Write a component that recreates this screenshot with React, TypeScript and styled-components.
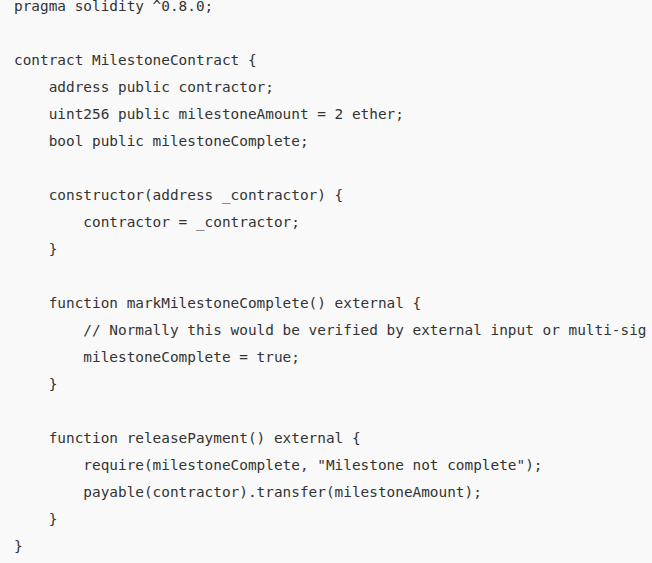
import React from "react";
import styled, { createGlobalStyle } from "styled-components";

const Global = createGlobalStyle`
  html, body { margin: 0; padding: 0; background: #f9f9f9; }
  body { overflow: hidden; }
`;

const Code = styled.pre`
  margin: -7px 0 0 0;
  padding: 0 0 0 14px;
  background: #f9f9f9;
  color: #333333;
  font-family: "DejaVu Sans Mono", "Liberation Mono", monospace;
  font-size: 14.4px;
  line-height: 27px;
  white-space: pre;
  width: 652px;
  box-sizing: border-box;
`;

const source = `pragma solidity ^0.8.0;

contract MilestoneContract {
    address public contractor;
    uint256 public milestoneAmount = 2 ether;
    bool public milestoneComplete;

    constructor(address _contractor) {
        contractor = _contractor;
    }

    function markMilestoneComplete() external {
        // Normally this would be verified by external input or multi-sig
        milestoneComplete = true;
    }

    function releasePayment() external {
        require(milestoneComplete, "Milestone not complete");
        payable(contractor).transfer(milestoneAmount);
    }
}`;

export default function App() {
  return (
    <>
      <Global />
      <Code>{source}</Code>
    </>
  );
}
